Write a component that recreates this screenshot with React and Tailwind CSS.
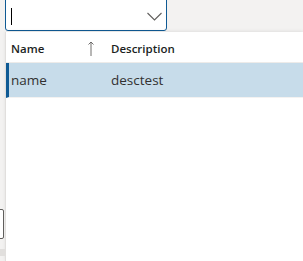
import { useState } from 'react';

const rows = [{ id: 1, name: 'name', description: 'desctest' }];

export default function App() {
  const [selected, setSelected] = useState(1);

  return (
    <div
      className="relative flex h-[261px] w-[303px] flex-col overflow-hidden bg-[#f3f2f1]"
      style={{ fontFamily: '"Open Sans", "Noto Sans", sans-serif' }}
    >
      {/* combo box */}
      <div className="pl-[5px]">
        <div className="-mt-[2px] flex h-[33px] w-[162px] items-center justify-between rounded-b-[3px] border border-[#0f5a94] bg-white pl-[5px] pr-[3px]">
          <span className="mt-[3px] h-[17px] w-px bg-black" />
          <svg className="mt-[3px] h-[16px] w-[17px] text-[#605e5c]" viewBox="0 0 17 16" fill="none" stroke="currentColor" strokeWidth="1.1">
            <path d="M1.5 5l7 7 7-7" />
          </svg>
        </div>
      </div>

      <div className="mt-[1px] flex flex-1">
        {/* left strip with the control behind the list */}
        <div className="relative w-[6px] border-r border-[#e1dfdd]">
          <div className="absolute left-[-10px] top-[177px] h-[30px] w-[14px] rounded-[2px] border border-[#605e5c] bg-white" />
          <div className="absolute left-0 top-[217px] h-[7px] w-[6px] bg-[#e1dfdd]" />
        </div>

        {/* list panel */}
        <div className="flex-1 bg-white shadow-[0_0_4px_rgba(0,0,0,0.12)]">
          <div className="flex h-[31px] items-center border-b border-[#edebe9] pt-[3px] text-[11.5px] font-semibold text-[#201f1e]">
            <div className="flex w-[105px] items-center justify-between pl-[5px] pr-[17px]">
              <span>Name</span>
              <svg className="h-[15px] w-[6px] text-[#605e5c]" viewBox="0 0 6 15" fill="none" stroke="currentColor" strokeWidth="0.9">
                <path d="M3 1v14M0.5 3.5 3 1l2.5 2.5" />
              </svg>
            </div>
            <span>Description</span>
          </div>
          {rows.map((row) => (
            <div
              key={row.id}
              onClick={() => setSelected(row.id)}
              className={`flex h-[35px] items-center border-b border-[#f3f2f1] text-[13.5px] text-[#323130] ${
                selected === row.id ? 'bg-[#c7dcea] border-l-[3px] border-l-[#0f5a94]' : ''
              }`}
            >
              <span className="w-[102px] pl-[2px]">{row.name}</span>
              <span>{row.description}</span>
            </div>
          ))}
        </div>
      </div>
    </div>
  );
}
